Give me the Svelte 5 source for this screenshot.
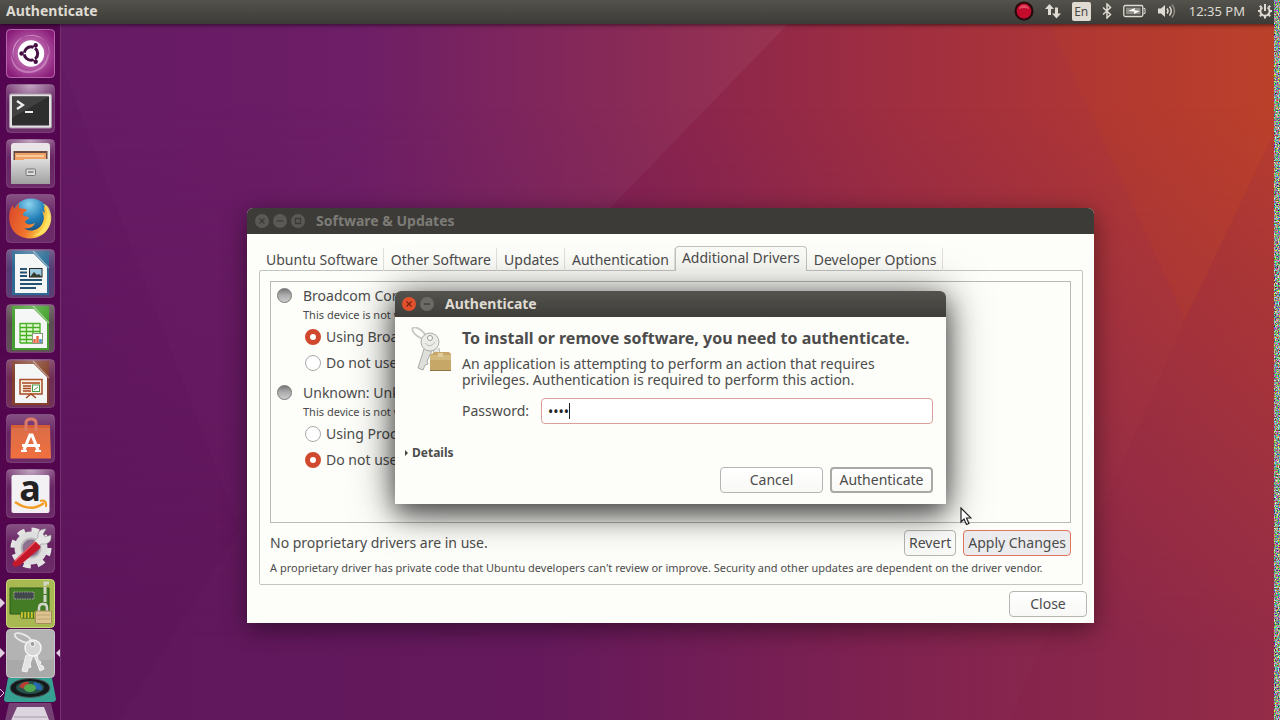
<script lang="ts">
	type Device = {
		name: string;
		note: string;
		options: string[];
		selected: number;
	};

	const tabs = [
		'Ubuntu Software',
		'Other Software',
		'Updates',
		'Authentication',
		'Additional Drivers',
		'Developer Options'
	];

	const launcherItems = [
		{ id: 'dash', label: 'Search your computer' },
		{ id: 'terminal', label: 'Terminal' },
		{ id: 'files', label: 'Files' },
		{ id: 'firefox', label: 'Firefox Web Browser' },
		{ id: 'writer', label: 'LibreOffice Writer' },
		{ id: 'calc', label: 'LibreOffice Calc' },
		{ id: 'impress', label: 'LibreOffice Impress' },
		{ id: 'software', label: 'Ubuntu Software' },
		{ id: 'amazon', label: 'Amazon' },
		{ id: 'settings', label: 'System Settings' },
		{ id: 'drivers', label: 'Software & Updates' },
		{ id: 'keys', label: 'Authenticate' }
	];

	const devices: Device[] = [
		{
			name: 'Broadcom Corp.',
			note: 'This device is not working.',
			options: ['Using Broadcom', 'Do not use'],
			selected: 0
		},
		{
			name: 'Unknown: Unknown',
			note: 'This device is not working.',
			options: ['Using Processor', 'Do not use'],
			selected: 1
		}
	];

	let activeTab = $state('Additional Drivers');
	let choices = $state(devices.map((device) => device.selected));
	let password = $state('1234');
</script>

<div class="screen">
	<svg class="wallpaper" viewBox="0 0 1280 720" preserveAspectRatio="none" aria-hidden="true">
		<defs>
			<linearGradient id="wall-top">
				<stop offset="0" stop-color="#651b65" />
				<stop offset="0.28" stop-color="#6c1c65" />
				<stop offset="0.5" stop-color="#862350" />
				<stop offset="0.7" stop-color="#9f2e40" />
				<stop offset="0.85" stop-color="#ae3636" />
				<stop offset="1" stop-color="#bb402d" />
			</linearGradient>
			<linearGradient id="wall-bottom">
				<stop offset="0" stop-color="#5e175c" />
				<stop offset="0.42" stop-color="#65195c" />
				<stop offset="0.7" stop-color="#802250" />
				<stop offset="1" stop-color="#962e48" />
			</linearGradient>
			<linearGradient id="fade" x1="0" y1="0" x2="0" y2="1">
				<stop offset="0.15" stop-color="#000" />
				<stop offset="0.9" stop-color="#fff" />
			</linearGradient>
			<linearGradient id="facet">
				<stop offset="0" stop-color="#fff" stop-opacity="0" />
				<stop offset="1" stop-color="#fff" stop-opacity=".05" />
			</linearGradient>
			<mask id="fade-mask"><rect width="1280" height="720" fill="url(#fade)" /></mask>
		</defs>
		<rect width="1280" height="720" fill="url(#wall-top)" />
		<rect width="1280" height="720" fill="url(#wall-bottom)" mask="url(#fade-mask)" />
		<path d="M788 24 610 208 250 560V24Z" fill="url(#facet)" />
		<path d="M1050 24 1185 320 1280 120V24Z" fill="#c8481f" opacity=".14" />
		<path d="M1185 320 1280 120V720H1010Z" fill="#701840" opacity=".06" />
		<path d="M120 720 240 530 60 60V720Z" fill="#400840" opacity=".06" />
	</svg>

	<header class="panel">
		<strong class="panel-title">Authenticate</strong>
		<div class="indicators">
			<svg width="20" height="20" viewBox="0 0 20 20">
				<circle cx="10" cy="10" r="9.5" fill="#25090c" />
				<circle cx="10" cy="10" r="7.4" fill="#c30b2c" />
				<path d="M5 8a5 4 0 0 1 10 0q-5-2-10 0" fill="#ec6376" opacity=".75" />
			</svg>
			<svg width="16" height="16" viewBox="0 0 16 16" fill="#dfdbd2">
				<path d="M4.500 1 9 6H6v6H3V6H0ZM11.500 15.500 7 10.500h3v-6h3v6h3Z" />
			</svg>
			<span class="keyboard">En</span>
			<svg width="10" height="16" viewBox="0 0 10 16" fill="none" stroke="#dfdbd2" stroke-width="1.500">
				<path d="m1 4.500 7.500 7L5 15V1l3.500 3.500L1 11.500" />
			</svg>
			<svg width="23" height="14" viewBox="0 0 23 14">
				<rect x=".8" y="1.500" width="19" height="11" rx="1.500" fill="none" stroke="#dfdbd2" stroke-width="1.300" />
				<path d="M20.500 4.500H22v5h-1.500" fill="none" stroke="#dfdbd2" />
				<rect x="3" y="3.700" width="14.500" height="6.600" fill="#8e8c85" />
				<path d="m5 7 7-3-.5 2.300L17 7l-6 3 .3-2.400Z" fill="#fff" />
			</svg>
			<svg width="20" height="16" viewBox="0 0 20 16">
				<path d="M1 5.500h3L8 2v12l-4-3.500H1Z" fill="#dfdbd2" />
				<path d="M10 5.500q2 2.500 0 5M12.500 3.500q3.500 4.500 0 9" fill="none" stroke="#dfdbd2" stroke-width="1.500" />
				<path d="M15 1.500q5 6.500 0 13" fill="none" stroke="#8e8c85" stroke-width="1.500" />
			</svg>
			<time>12:35 PM</time>
			<svg width="16" height="16" viewBox="0 0 16 16" fill="none" stroke="#dfdbd2">
				<path d="M5.500 4.300a4.600 4.600 0 1 0 5 0" stroke-width="2" />
				<path d="M8 1v7" stroke-width="2" />
				<path d="M1 8h2M13 8h2M2.800 13.200l1.500-1.500M13.200 13.200l-1.500-1.500M8 13v2.500M2.800 2.800l1.500 1.500M13.200 2.800l-1.500 1.500" stroke-width="2" />
			</svg>
		</div>
	</header>

	<div class="workspace">
		<nav class="launcher" aria-label="Launcher">
			<svg class="defs" width="0" height="0" aria-hidden="true">
				<defs>
					<linearGradient id="tile" x1="0" y1="0" x2="0" y2="1">
						<stop offset="0" stop-color="#fff" stop-opacity=".3" />
						<stop offset=".4" stop-color="#fff" stop-opacity=".12" />
						<stop offset="1" stop-color="#fff" stop-opacity=".15" />
					</linearGradient>
					<radialGradient id="glow" cx=".5" cy="0" r=".5">
						<stop offset="0" stop-color="#fff" stop-opacity=".5" />
						<stop offset="1" stop-color="#fff" stop-opacity="0" />
					</radialGradient>
					<radialGradient id="swirl" cx=".5" cy=".5" r=".6">
						<stop offset="0" stop-color="#dca0d3" />
						<stop offset=".65" stop-color="#a64597" />
						<stop offset="1" stop-color="#8a1d79" />
					</radialGradient>
					<linearGradient id="grey" x1="0" y1="0" x2="0" y2="1">
						<stop offset="0" stop-color="#ddd" />
						<stop offset="1" stop-color="#a0a0a0" />
					</linearGradient>
					<linearGradient id="orange" x1="0" y1="0" x2="0" y2="1">
						<stop offset="0" stop-color="#dc6d48" />
						<stop offset="1" stop-color="#f0703f" />
					</linearGradient>
					<radialGradient id="globe" cx=".45" cy=".15" r=".8">
						<stop offset="0" stop-color="#8bd3ef" />
						<stop offset=".5" stop-color="#237fb8" />
						<stop offset="1" stop-color="#123f70" />
					</radialGradient>
					<linearGradient id="fox" x1="0" y1="0" x2="1" y2=".3">
						<stop offset="0" stop-color="#d8452a" />
						<stop offset=".6" stop-color="#f2762d" />
						<stop offset="1" stop-color="#ffe14a" />
					</linearGradient>
				</defs>
			</svg>
			{#each launcherItems as item}
				<button class="tile {item.id}" aria-label={item.label}>
					<svg viewBox="0 0 49 49">
						<rect x=".5" y=".5" width="48" height="48" rx="4" fill="url(#tile)" stroke="#fff" stroke-opacity=".16" />
						{#if item.id === 'dash'}
							<rect x=".5" y=".5" width="48" height="48" rx="4" fill="url(#swirl)" stroke="#b566aa" />
							<path d="M8 30C3 16 14 5 28 7s18 14 14 24c4-17-6-25-17-25S5 18 8 30" fill="#e5bbdf" opacity=".7" />
							<path d="M42 24c2 12-8 20-20 20S5 34 5 26c3 11 9 16 18 16s17-7 19-18" fill="#dca6d4" opacity=".55" />
							<circle cx="25" cy="24.500" r="13.200" fill="#fff" />
							<circle cx="25" cy="24.500" r="6.700" fill="none" stroke="#461044" stroke-width="3" />
							<path d="m25 24.500-12 0M25 24.500l6-10.400M25 24.500l6 10.400" stroke="#fff" stroke-width="1.500" />
							<circle cx="15.500" cy="24.500" r="2.200" fill="#461044" />
							<circle cx="29.700" cy="16.300" r="2.200" fill="#461044" />
							<circle cx="29.700" cy="32.700" r="2.200" fill="#461044" />
						{:else if item.id === 'terminal'}
							<rect x=".5" y=".5" width="48" height="48" rx="4" fill="url(#glow)" />
							<rect x="3.500" y="10" width="42" height="34" rx="1.500" fill="#e3dfe3" stroke="#a99aa9" />
							<rect x="6" y="12.500" width="37" height="29" fill="#2e2e2e" />
							<path d="M6 12.500h37L6 34Z" fill="#414141" />
							<path d="m11 17 6 4-6 4M19 28h8" fill="none" stroke="#eee" stroke-width="2.200" />
						{:else if item.id === 'files'}
							<rect x=".5" y=".5" width="48" height="48" rx="4" fill="url(#glow)" />
							<path d="M5 7q0-3 3-3h33q3 0 3 3v17H5Z" fill="#e9e4e6" />
							<path d="M7.500 12h34v9h-34Z" fill="#6b4b42" />
							<path d="M9 14h31v8H9Z" fill="#efa064" />
							<path d="M10 17h28" stroke="#fbd9ae" stroke-width="1.500" />
							<path d="M5 21h12l2-1h25v25H5Z" fill="url(#grey)" />
							<rect x="20" y="30" width="9.500" height="6.500" rx="1" fill="#ddd" stroke="#777" />
							<path d="M22 33h5.500" stroke="#777" stroke-width="1.500" />
						{:else if item.id === 'firefox'}
							<circle cx="25" cy="24" r="19.500" fill="url(#globe)" />
							<path d="M40 12c5 8 6 17 1 24-6 9-20 11-29 5C2 35 2 20 5 14l2-3 1 4 5-6 0 5c3 1 6 0 8 2-2 2-4 2-4 5 1 2 6 1 6 3-1 2-4 2-4 4 2 3 6 3 10 1-2 5-8 6-11 5 6 5 15 2 18-4 3-5 2-9 0-13l3 2c-1-4-2-7 1-7" fill="url(#fox)" />
							<path d="M37 10c6 6 4 11 4 15-2 11-9 15-15 17 17 0 22-15 18-25-1-4-4-7-7-7" fill="#fde36a" opacity=".85" />
						{:else if item.id === 'writer' || item.id === 'calc' || item.id === 'impress'}
							<rect class="edge" x="1" y="1" width="47" height="47" rx="4" opacity=".3" />
							<path class="edge" d="M6 2h37v44H6Z" opacity=".9" />
							<path d="M9 5h19l13 13v26H9Z" fill="#f4f5f5" />
							<path class="fold" d="m28 5 13 13V5Z" />
							<path d="m27 2 16 17" stroke="#fff" stroke-opacity=".4" stroke-width="1.500" />
							{#if item.id === 'writer'}
								<path d="M14 20h7M14 23.500h7M14 27h7M14 31h22M14 35h22M14 39h16" stroke="#235272" stroke-width="2" />
								<rect x="23.500" y="19.500" width="12.500" height="8.500" fill="#9bc9df" stroke="#222" />
								<path d="m24 28 4-5 3 3 2-1 3 3Z" fill="#363c2e" />
							{:else if item.id === 'calc'}
								<rect x="14" y="19.500" width="20" height="19.500" fill="#e3f8d4" />
								<path d="M14 19.500h20M14 23.500h20M14 27.500h20M14 31.500h20M14 35.500h20M14 39h20M14 19v20M20.500 19v20M27 19v20M34 19v20" stroke="#43af21" stroke-width="1.300" />
								<rect x="26.500" y="29.500" width="10" height="10" fill="#fff" stroke="#87987c" />
								<path d="M28.500 39v-4M31.500 39v-7M34.500 39v-3" stroke-width="2.500" stroke="#e66f47" />
								<path d="M34.500 39v-4" stroke-width="2.500" stroke="#4b9dd5" />
							{:else}
								<rect x="14" y="20.500" width="22" height="14.500" fill="#f9efdf" stroke="#a74a25" stroke-width="1.500" />
								<path d="M16 24h18M17 27h8M17 29.500h8M17 32h8M20 39l5-4 5 4" fill="none" stroke="#a74a25" stroke-width="1.500" />
								<rect x="26.500" y="26" width="7" height="6.500" fill="#fff" stroke="#4a9a4c" />
								<path d="m28 31 4-3" stroke="#4a9a4c" />
							{/if}
							<rect x=".5" y=".5" width="48" height="48" rx="4" fill="url(#glow)" opacity=".5" />
						{:else if item.id === 'software'}
							<path d="M5 14h39l1 30.500H4.500Z" fill="url(#orange)" />
							<path d="M5 14V11h39v3" fill="#d45d33" />
							<path d="M20 17V9q0-4 5-4t5 4v8" fill="none" stroke="#dc7b67" stroke-width="3" />
							<path d="m18 36 6-15h2l6 15M16 31.500h18" fill="none" stroke="#fff" stroke-width="3.200" />
							<path d="M15 37h6M29 37h6" stroke="#fff" stroke-width="2" />
						{:else if item.id === 'amazon'}
							<rect x=".5" y=".5" width="48" height="48" rx="4" fill="url(#glow)" />
							<rect x="5.500" y="6" width="38" height="38" rx="2" fill="#f3f1f3" />
							<text x="24" y="32" text-anchor="middle">a</text>
							<path d="M9 33q16 11 29 1" fill="none" stroke="#f39c22" stroke-width="2.400" />
							<path d="M34 32q7-2 6 6" fill="none" stroke="#f39c22" stroke-width="2" />
						{:else if item.id === 'settings'}
							<circle cx="25" cy="24" r="17" fill="none" stroke="#e4e4e4" stroke-width="7" stroke-dasharray="7 6.350" />
							<circle cx="25" cy="24" r="13" fill="none" stroke="#dedede" stroke-width="7" />
							<circle cx="25" cy="24" r="9.500" fill="#8d6f90" stroke="#b9b9b9" stroke-width="2" />
							<path d="m27 19 5-6q-1-7 6-8l2 0-3 5 2 3 6-2q1 8-6 9l-4 0-4 3Z" fill="#e6e6e6" stroke="#999" stroke-width=".6" />
							<path d="m8 39 21-20 4 4L13 40q-5 3-5-1" fill="#c5182b" stroke="#c5182b" stroke-width="3" stroke-linejoin="round" />
							<path d="m9 37 20-19" stroke="#e2606b" stroke-width="1.500" />
						{:else if item.id === 'drivers'}
							<rect x=".5" y=".5" width="48" height="48" rx="4" fill="#a7b950" stroke="#c9d67b" />
							<path d="M4 9h39v26H29v4H15v-4H4Z" fill="#447b25" stroke="#2d5a18" />
							<path d="M8 13h20v7H8Z" fill="#42494c" stroke="#a5aaa0" stroke-dasharray="1.500 1" />
							<path d="M15 36h14" stroke="#d2c32f" stroke-width="6" stroke-dasharray="1.800 1.500" />
							<path d="M43 4h-4v21" fill="none" stroke="#d1d6c7" stroke-width="3" stroke-dasharray="7 1" />
							<path d="M33 33v-4q0-4 4-4t4 4v4" fill="none" stroke="#d4d5cd" stroke-width="2.500" />
							<rect x="29.500" y="32" width="16" height="12.500" rx="1" fill="#ddc390" stroke="#a18d5c" />
							<path d="M31 36h13M31 40h13" stroke="#bca271" />
						{:else if item.id === 'keys'}
							<rect x=".5" y=".5" width="48" height="48" rx="4" fill="#a9a9a9" stroke="#c6c6c6" />
							<rect x="1" y="1" width="47" height="30" rx="4" fill="#fff" opacity=".12" />
							<path d="m20 26-4 16 5 1 1-4 3-1-1-3 3-9M28 26l6 16 4-2-1-3-3-1 1-3-3-2-1-7" fill="#e3e3e3" stroke="#f4f4f4" />
							<ellipse cx="17" cy="9" rx="9" ry="3.500" transform="rotate(25 17 9)" fill="none" stroke="#e8e8e8" stroke-width="1.800" />
							<circle cx="27" cy="19" r="8" fill="#d6d6d6" stroke="#f4f4f4" stroke-width="1.500" />
							<circle cx="26.500" cy="15" r="2.500" fill="#9d9d9d" stroke="#fff" />
						{/if}
					</svg>
				</button>
			{/each}
			<button class="folded" aria-label="Screen recorder">
				<svg viewBox="0 0 52 25">
					<path d="M4 0h44l4 21q0 3-4 3H3q-3 0-3-3Z" fill="#36a093" />
					<ellipse cx="26" cy="10" rx="20" ry="9.500" fill="#14191c" stroke="#4e5c5c" />
					<ellipse cx="26" cy="9.500" rx="14" ry="6.500" fill="#25534c" />
					<path d="M15 9q3-6 10-5l-2 8Z" fill="#b63e37" />
					<path d="M30 4q9 2 8 8l-9-1Z" fill="#2668b3" />
					<ellipse cx="26" cy="10" rx="6" ry="4" fill="#50a74f" />
				</svg>
			</button>
			<button class="folded" aria-label="Trash">
				<svg viewBox="0 0 52 22">
					<path d="M5 0h42l5 22H0Z" fill="#927397" opacity=".55" />
					<path d="M13 4h27l7 18H5Z" fill="#dcd5df" />
					<path d="M10 14h33" stroke="#a69bab" />
				</svg>
			</button>
		</nav>

		<main class="desktop">
			<section class="window updates" aria-label="Software & Updates">
				<div class="titlebar inactive">
					<button class="control" aria-label="Close window">
						<svg viewBox="0 0 14 14"><path d="m4.500 4.500 5 5M9.500 4.500l-5 5" /></svg>
					</button>
					<button class="control" aria-label="Minimize window">
						<svg viewBox="0 0 14 14"><path d="M4 7h6" /></svg>
					</button>
					<button class="control" aria-label="Maximize window">
						<svg viewBox="0 0 14 14"><path d="M4.500 4.500h5v5h-5Z" /></svg>
					</button>
					<strong>Software &amp; Updates</strong>
				</div>
				<div class="updates-body">
					<div class="tabs" role="tablist">
						{#each tabs as tab}
							<button
								role="tab"
								class="tab"
								class:selected={tab === activeTab}
								aria-selected={tab === activeTab}
								onclick={() => (activeTab = tab)}>{tab}</button
							>
						{/each}
					</div>
					<div class="tab-page" role="tabpanel">
						<div class="device-list">
							{#each devices as device, i}
								<div class="device" role="radiogroup" aria-label={device.name}>
									<span class="led"></span>
									<div class="device-info">
										<div class="device-name">{device.name}</div>
										<div class="small">{device.note}</div>
										{#each device.options as option, n}
											<label class="option">
												<input type="radio" name="device-{i}" value={n} bind:group={choices[i]} />
												{option}
											</label>
										{/each}
									</div>
								</div>
							{/each}
						</div>
						<div class="status">
							<span>No proprietary drivers are in use.</span>
							<button class="button">Revert</button>
							<button class="button apply">Apply Changes</button>
						</div>
						<p class="small">
							A proprietary driver has private code that Ubuntu developers can't review or improve. Security
							and other updates are dependent on the driver vendor.
						</p>
					</div>
					<div class="window-actions">
						<button class="button close">Close</button>
					</div>
				</div>
			</section>

			<section class="window dialog" role="dialog" aria-labelledby="dialog-heading">
				<div class="titlebar">
					<button class="control red" aria-label="Close dialog">
						<svg viewBox="0 0 14 14"><path d="m4.500 4.500 5 5M9.500 4.500l-5 5" /></svg>
					</button>
					<button class="control" aria-label="Minimize dialog">
						<svg viewBox="0 0 14 14"><path d="M4 7h6" /></svg>
					</button>
					<strong>Authenticate</strong>
				</div>
				<form class="dialog-body" onsubmit={(e) => e.preventDefault()}>
					<div class="message">
						<svg class="auth-icon" width="41" height="48" viewBox="0 0 41 48" aria-hidden="true">
							<ellipse cx="8" cy="6" rx="8" ry="3.500" transform="rotate(38 8 6)" fill="none" stroke="#c8c8c4" stroke-width="1.800" />
							<path d="m13 22-6 19 5 2 2-5 3-1-1-3 5-10" fill="#dededb" stroke="#aaa" />
							<path d="m22 22 4 17 5-2-3-16" fill="#e6e6e3" stroke="#bbb" />
							<circle cx="19" cy="15" r="9" fill="#ebebe8" stroke="#aaa" />
							<circle cx="19" cy="11" r="2.500" fill="#fcfcf8" stroke="#999" />
							<path d="M14 16q5 6 10-1" fill="none" stroke="#bbb" />
							<path d="m21 27 2-2h15l2 2v17H19V27Z" fill="#c6a768" />
							<path d="M19 28h21v5H19Z" fill="#d3b87d" />
							<path d="M27 26h5v4h-5Z" fill="#dfcb99" />
							<path d="M19 43.500h21" stroke="#8f7542" />
						</svg>
						<div class="message-text">
							<h1 id="dialog-heading">To install or remove software, you need to authenticate.</h1>
							<p>
								An application is attempting to perform an action that requires<br />
								privileges. Authentication is required to perform this action.
							</p>
							<div class="field">
								<label for="password">Password:</label>
								<div class="entry">
									<input id="password" type="password" bind:value={password} />
									<span class="caret"></span>
								</div>
							</div>
						</div>
					</div>
					<details>
						<summary>
							<svg width="3" height="6" viewBox="0 0 3 6"><path d="m0 0 3 3-3 3Z" fill="#444" /></svg>
							Details
						</summary>
					</details>
					<div class="dialog-actions">
						<button class="button" type="button">Cancel</button>
						<button class="button default" type="submit">Authenticate</button>
					</div>
				</form>
			</section>

			<svg class="pointer" width="12" height="19" viewBox="0 0 12 19" aria-hidden="true">
				<path d="M1 1v14l3-3 2.500 5.500 2.500-1L6.500 11H11Z" fill="#fff" stroke="#222" stroke-width="1.200" />
			</svg>
		</main>
	</div>

	<!-- running-window markers beside the launcher tiles -->
	<svg class="marker" style:top="598px" width="5" height="10" viewBox="0 0 5 10"><path d="m0 0 5 5-5 5Z" fill="#e0cfe0" /></svg>
	<svg class="marker" style:top="648px" width="5" height="10" viewBox="0 0 5 10"><path d="m0 0 5 5-5 5Z" fill="#e0cfe0" /></svg>
	<svg class="marker" style:top="688px" width="5" height="10" viewBox="0 0 5 10"><path d="m0 1 4 4-4 4" fill="none" stroke="#e0cfe0" /></svg>
	<svg class="marker focused" style:top="648px" width="5" height="10" viewBox="0 0 5 10"><path d="M5 1 1 5l4 4Z" fill="#e0cfe0" /></svg>

	<svg class="static" aria-hidden="true">
		<filter id="noise" x="0" y="0" width="100%" height="100%" color-interpolation-filters="sRGB">
			<feTurbulence type="fractalNoise" baseFrequency=".7" numOctaves="2" seed="4" />
			<feColorMatrix values="2 0 0 0 -.45  0 2 0 0 -.4  0 0 2 0 -.45  0 0 0 0 1" />
		</filter>
		<rect width="100%" height="100%" filter="url(#noise)" />
	</svg>
</div>

<style>
	:global(body) {
		margin: 0;
	}

	.screen {
		position: relative;
		display: flex;
		flex-direction: column;
		height: 100vh;
		overflow: hidden;
		background-color: #651b65;
		color: #4c4c4c;
		font-family: 'Noto Sans', 'Open Sans', sans-serif;
		font-size: 14px;
		line-height: 20px;
	}

	button,
	input {
		font: inherit;
		color: inherit;
		margin: 0;
	}

	button {
		padding: 0;
		border: none;
		background: none;
	}

	h1,
	p {
		margin: 0;
	}

	svg {
		display: block;
		flex-shrink: 0;
	}

	.wallpaper {
		position: absolute;
		inset: 0;
		width: 100%;
		height: 100%;
	}

	.panel {
		position: relative;
		display: flex;
		align-items: center;
		justify-content: space-between;
		height: 24px;
		padding: 0 7px 2px 6px;
		box-sizing: border-box;
		background: linear-gradient(#53524c, #3c3b37);
		box-shadow: 0 1px 4px rgba(0, 0, 0, 0.6);
		color: #dfdbd2;
		z-index: 1;
	}

	.indicators {
		display: flex;
		align-items: center;
		gap: 11px;
		font-size: 13px;
	}

	.indicators time {
		padding: 0 1px;
	}

	.keyboard {
		width: 19px;
		border-radius: 2px;
		background-color: #dfdbd2;
		color: #4a4944;
		line-height: 19px;
		text-align: center;
		font-size: 12px;
	}

	.workspace {
		position: relative;
		display: flex;
		flex: 1;
		min-height: 0;
	}

	.launcher {
		display: flex;
		flex-direction: column;
		align-items: center;
		gap: 6px;
		width: 60px;
		padding-top: 5px;
		border-right: 1px solid rgba(255, 255, 255, 0.18);
		background-color: rgba(78, 0, 72, 0.72);
		overflow: hidden;
	}

	.defs {
		position: absolute;
	}

	.tile {
		width: 49px;
		height: 49px;
		flex-shrink: 0;
	}

	.tile svg {
		width: 100%;
		overflow: visible;
	}

	.tile text {
		font: bold 36px 'Open Sans', sans-serif;
		fill: #222;
	}

	.drivers {
		margin-bottom: -5px;
	}

	.keys {
		margin-bottom: -6px;
	}

	.writer .edge,
	.writer .fold {
		fill: #2b6f97;
	}

	.calc .edge,
	.calc .fold {
		fill: #44a52c;
	}

	.impress .edge,
	.impress .fold {
		fill: #85432a;
	}

	.folded {
		width: 52px;
		flex-shrink: 0;
	}

	.folded + .folded {
		margin-top: -6px;
	}

	.desktop {
		position: relative;
		flex: 1;
	}

	.window {
		position: absolute;
		border-radius: 6px 6px 0 0;
		background-color: #fdfdf9;
	}

	.updates {
		top: 184px;
		left: 186px;
		right: 186px;
		box-shadow: 0 6px 24px rgba(0, 0, 0, 0.45);
	}

	.dialog {
		top: 267px;
		left: 334px;
		right: 334px;
		box-shadow:
			0 10px 24px rgba(0, 0, 0, 0.5),
			0 4px 44px rgba(0, 0, 0, 0.55);
	}

	.titlebar {
		display: flex;
		align-items: center;
		gap: 4px;
		height: 26px;
		padding-left: 7px;
		border-radius: 6px 6px 0 0;
		background: linear-gradient(#54534e, #3e3d39);
		color: #dfdbd2;
	}

	.titlebar strong {
		margin-left: 7px;
	}

	.inactive {
		height: 26px;
		padding-left: 8px;
		background: #3c3b38;
		color: #7d7b76;
	}

	.control {
		width: 14px;
		height: 14px;
		border-radius: 50%;
		background-color: #6b6a65;
	}

	.control path {
		fill: none;
		stroke: #3c3b37;
		stroke-width: 1.3;
	}

	.inactive .control {
		background-color: #5a5955;
	}

	.control.red {
		background-color: #e2512c;
	}

	.control.red path {
		stroke: #7c2513;
	}

	.updates-body {
		padding: 12px 7px 6px 12px;
	}

	.tabs {
		display: flex;
		align-items: flex-end;
		margin-bottom: -1px;
	}

	.tab {
		padding: 2px 5px 1px 7px;
		border-right: 1px solid #e0e0dc;
	}

	.tab.selected {
		padding: 1px 6px 3px 6px;
		border: 1px solid #c2c2be;
		border-bottom: none;
		border-radius: 4px 4px 0 0;
		background-color: #fafaf6;
	}

	.tab-page {
		margin-right: 4px;
		padding: 10px 11px 7px 10px;
		border: 1px solid #c4c4c0;
		border-radius: 2px;
	}

	.device-list {
		height: 236px;
		padding: 4px 5px 0 6px;
		border: 1px solid #b9b9b5;
	}

	.device {
		display: flex;
		gap: 11px;
		margin-bottom: 7px;
		white-space: nowrap;
	}

	.led {
		width: 13px;
		height: 13px;
		margin-top: 2px;
		border: 1px solid #777;
		border-radius: 50%;
		background: linear-gradient(#777, #aaa 45%, #ccc);
	}

	.small {
		font-size: 11px;
		line-height: 18px;
	}

	.option {
		display: flex;
		align-items: center;
		gap: 5px;
		height: 26px;
		padding-left: 2px;
	}

	.option input {
		appearance: none;
		width: 16px;
		height: 16px;
		box-sizing: border-box;
		border: 1px solid #aaa;
		border-radius: 50%;
		background-color: #fff;
	}

	.option input:checked {
		border: 5px solid #d0492e;
	}

	.status {
		display: flex;
		align-items: center;
		gap: 7px;
		padding: 7px 0 3px;
	}

	.status span {
		flex: 1;
	}

	.button {
		min-height: 26px;
		padding: 0 4px;
		box-sizing: border-box;
		border: 1px solid #b5b5b1;
		border-radius: 4px;
		background: linear-gradient(#fff, #f8f8f6);
	}

	.apply {
		border-color: #e1765f;
		background: #ececee;
	}

	.window-actions {
		display: flex;
		justify-content: flex-end;
		padding-top: 6px;
	}

	.close {
		width: 78px;
	}

	.dialog-body {
		display: flex;
		flex-direction: column;
		padding: 10px 13px 11px 10px;
	}

	.message {
		display: flex;
		gap: 10px;
	}

	.auth-icon {
		margin-left: 6px;
	}

	.message-text {
		flex: 1;
	}

	h1 {
		font-size: 16px;
		line-height: 22px;
		white-space: nowrap;
	}

	.message p {
		margin-top: 7px;
		line-height: 16px;
		white-space: nowrap;
	}

	.field {
		display: flex;
		align-items: center;
		gap: 12px;
		margin-top: 10px;
	}

	.entry {
		position: relative;
		flex: 1;
	}

	.entry input {
		width: 100%;
		height: 26px;
		padding: 0 6px;
		box-sizing: border-box;
		border: 1px solid #dba099;
		border-radius: 4px;
		background-color: #fff;
		color: #222;
		outline: none;
	}

	.caret {
		position: absolute;
		top: 5px;
		left: 28px;
		width: 1px;
		height: 16px;
		background-color: #222;
	}

	details {
		margin-top: 19px;
		font-size: 12px;
		font-weight: bold;
	}

	summary {
		display: flex;
		align-items: center;
		gap: 4px;
	}

	.dialog-actions {
		display: flex;
		justify-content: flex-end;
		gap: 7px;
		margin-top: 4px;
	}

	.dialog-actions .button {
		width: 103px;
	}

	.dialog-actions .default {
		border: 2px solid #a9a9a6;
	}

	.pointer {
		position: absolute;
		top: 483px;
		left: 899px;
	}

	.marker {
		position: absolute;
		left: 0;
	}

	.marker.focused {
		left: 55px;
	}

	.static {
		position: absolute;
		top: 0;
		right: 0;
		width: 6px;
		height: 100%;
		z-index: 2;
	}
</style>
